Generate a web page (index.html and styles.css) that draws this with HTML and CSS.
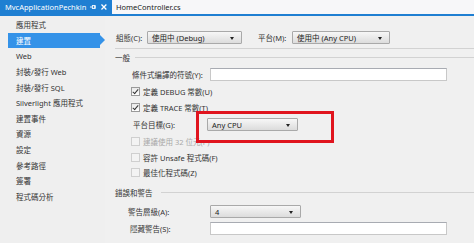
FILE: index.html
```html
<html>

<head>
  <link rel="stylesheet" href="styles.css">
</head>

<body>
  <div class="window">
    <div class="tabs">
      <div class="tab tab-active">
        <span class="tab-title">MvcApplicationPechkin</span>
        <svg class="tab-icon" viewBox="0 0 8 8" width="8" height="8">
          <path d="M1 4h2.5M3.5 2v4M3.5 2.5h3v3h-3M5.5 2.5v3" fill="none" stroke="#fff" stroke-width="0.9"></path>
        </svg>
        <svg class="tab-icon" viewBox="0 0 8 8" width="8" height="8">
          <path d="M1.5 1.5l5 5M6.5 1.5l-5 5" fill="none" stroke="#fff" stroke-width="1.3"></path>
        </svg>
      </div>
      <div class="tab">HomeController.cs</div>
    </div>
    <div class="content">
      <ul class="nav">
        <li>應用程式</li>
        <li class="selected">建置</li>
        <li>Web</li>
        <li>封裝/發行 Web</li>
        <li>封裝/發行 SQL</li>
        <li>Silverlight 應用程式</li>
        <li>建置事件</li>
        <li>資源</li>
        <li>設定</li>
        <li>參考路徑</li>
        <li>簽署</li>
        <li>程式碼分析</li>
      </ul>
      <div class="main">
        <div class="config-row">
          <span class="config-label">組態(C):</span>
          <div class="select select-config">使用中 (Debug)</div>
          <span class="config-label platform-label">平台(M):</span>
          <div class="select select-platform">使用中 (Any CPU)</div>
        </div>
        <div class="section section-general">一般</div>
        <div class="row row-input">
          <span class="label">條件式編譯的符號(Y):</span>
          <div class="input"></div>
        </div>
        <div class="row row-debug">
          <span class="box checked"></span>定義 DEBUG 常數(U)
        </div>
        <div class="row row-trace">
          <span class="box checked"></span>定義 TRACE 常數(T)
        </div>
        <div class="row row-target">
          <span class="label">平台目標(G):</span>
          <div class="select select-short">Any CPU</div>
        </div>
        <div class="row row-check disabled">
          <span class="box"></span>建議使用 32 位元(P)
        </div>
        <div class="row row-check">
          <span class="box"></span>容許 Unsafe 程式碼(F)
        </div>
        <div class="row row-check">
          <span class="box"></span>最佳化程式碼(Z)
        </div>
        <div class="section section-errors">錯誤和警告</div>
        <div class="row row-warn">
          <span class="label">警告層級(A):</span>
          <div class="select select-short">4</div>
        </div>
        <div class="row row-hide">
          <span class="label">隱藏警告(S):</span>
          <div class="input"></div>
        </div>
      </div>
    </div>
    <div class="highlight"></div>
  </div>
</body>

</html>
```

FILE: styles.css
```css
:root {
  --blue: #1f7fd2;
  --text: #333;
}

* {
  margin: 0;
  padding: 0;
  box-sizing: border-box;
}

body {
  font-family: "Noto Sans", "Noto Sans CJK TC", sans-serif;
  font-size: 7.5px;
  color: var(--text);
  background: #f0f0f0;
}

.window {
  position: relative;
  width: 474px;
  height: 243px;
  overflow: hidden;
}

.tabs {
  display: flex;
  height: 16px;
  background: #f7f7f9;
  border-bottom: 2px solid var(--blue);
}

.tab {
  display: flex;
  align-items: center;
  padding: 0 4px 0 4px;
  height: 14px;
  color: #222;
}

.tab-active {
  width: 112px;
  background: var(--blue);
  color: #fff;
  padding-left: 5px;
}

.tab-title {
  flex: 1;
}

.tab-icon {
  margin-left: 3px;
}

.content {
  display: flex;
  height: 227px;
}

.nav {
  list-style: none;
  width: 105px;
  padding-top: 1px;
  background: #efefef;
}

.nav li {
  height: 15.6px;
  display: flex;
  align-items: center;
  padding-left: 16px;
  white-space: nowrap;
}

.nav li.selected {
  position: relative;
  margin: 0.6px 0 0.6px 8px;
  height: 14.4px;
  width: 92px;
  padding-left: 8px;
  background: #3492e8;
  color: #fff;
}

.nav li.selected::after {
  content: "";
  position: absolute;
  right: -5px;
  top: 2.2px;
  border-left: 5px solid #3492e8;
  border-top: 5px solid transparent;
  border-bottom: 5px solid transparent;
}

.main {
  flex: 1;
  padding-left: 10px;
}

.config-row {
  display: flex;
  align-items: center;
  padding-top: 11px;
  height: 33px;
  border-bottom: 1px solid #d2d2d2;
}

.config-label {
  width: 32px;
  padding-left: 1px;
}

.platform-label {
  width: 35px;
  margin-left: 15px;
}

.select {
  position: relative;
  height: 13px;
  border: 1px solid #a9a9a9;
  border-radius: 1px;
  background: linear-gradient(#f7f7f7, #dcdcdc);
  padding-left: 4px;
  display: flex;
  align-items: center;
  color: #222;
}

.select::after {
  content: "";
  position: absolute;
  right: 7px;
  top: 5px;
  border-top: 3px solid #222;
  border-left: 2px solid transparent;
  border-right: 2px solid transparent;
}

.select-config {
  width: 95px;
}

.select-platform {
  width: 98px;
}

.select-short {
  width: 91px;
}

.section {
  display: flex;
  align-items: center;
  gap: 5px;
}

.section::after {
  content: "";
  flex: 1;
  height: 1px;
  background: #d2d2d2;
}

.section-general {
  height: 16px;
}

.section-errors {
  height: 23px;
  gap: 8px;
}

.row {
  display: flex;
  align-items: center;
  padding-left: 16px;
}

.label {
  width: 79px;
  white-space: nowrap;
}

.input {
  width: 237px;
  height: 13px;
  background: #fff;
  border: 1px solid #c8c8c8;
  border-top-color: #a8abb2;
}

.row-input {
  height: 18px;
  padding-left: 17px;
}

.row-input .label {
  width: 78px;
}

.row-debug {
  height: 17px;
}

.row-trace {
  height: 15px;
}

.row-target {
  height: 19px;
  padding-left: 18px;
}

.row-target .label {
  width: 74px;
}

.row-check {
  height: 15.5px;
}

.row-warn {
  height: 16px;
  padding-left: 13px;
}

.row-warn .label {
  width: 82px;
}

.row-hide {
  height: 17px;
  padding-left: 15px;
}

.row-hide .label {
  width: 80px;
}

.box {
  width: 9px;
  height: 9px;
  margin-right: 3px;
  border: 1px solid #9a9a9a;
  background: linear-gradient(#e9e9e9, #ffffff);
  position: relative;
}

.box.checked::after {
  content: "";
  position: absolute;
  left: 2px;
  top: 0px;
  width: 2px;
  height: 5px;
  border-right: 1.3px solid #333;
  border-bottom: 1.3px solid #333;
  transform: rotate(40deg);
}

.disabled {
  color: #a8a8a8;
}

.row-check .box {
  border-color: #cfcfcf;
  background: #f3f3f3;
}

.highlight {
  position: absolute;
  left: 196px;
  top: 111px;
  width: 138px;
  height: 32px;
  border: 3px solid #e0141e;
}
```
